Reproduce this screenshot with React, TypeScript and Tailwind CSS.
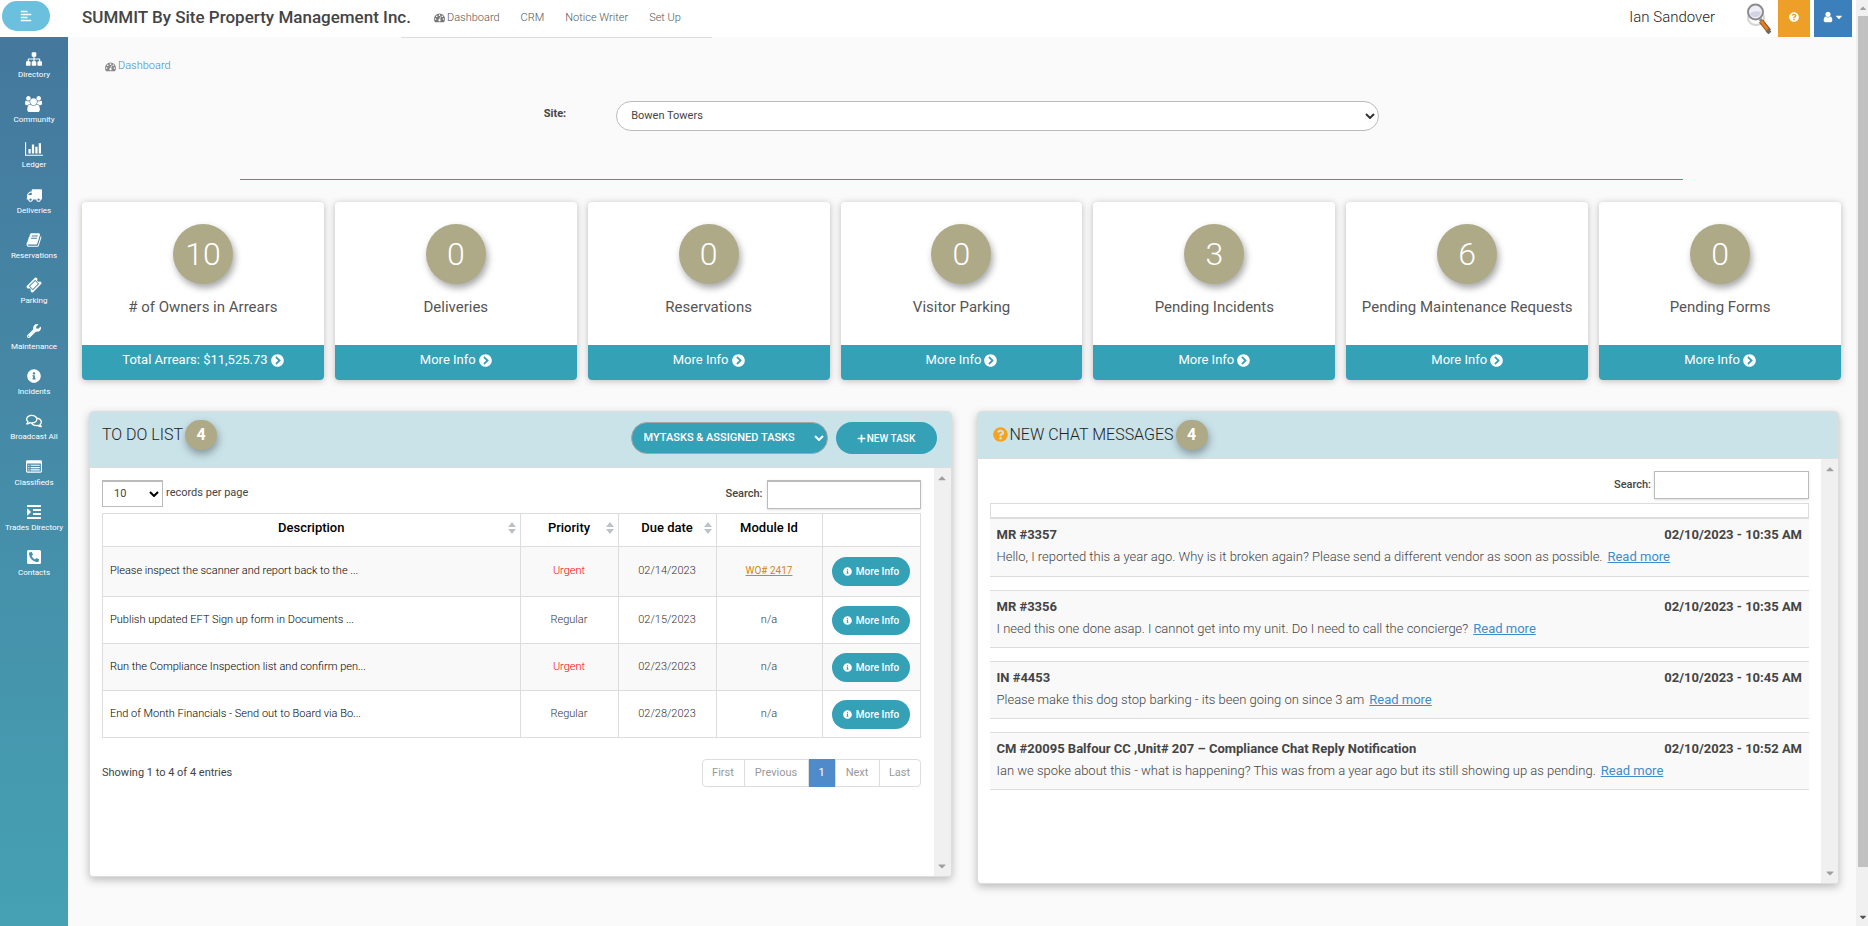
import type { ReactNode } from 'react';
import {
  FaAlignLeft,
  FaCaretDown,
  FaCaretUp,
  FaChevronCircleRight,
  FaIndent,
  FaInfoCircle,
  FaPhoneSquareAlt,
  FaPlus,
  FaQuestionCircle,
  FaRegComments,
  FaWrench,
} from 'react-icons/fa';

const PATHS = {
  sitemap:
    'M1792 1248v320q0 40-28 68t-68 28h-320q-40 0-68-28t-28-68v-320q0-40 28-68t68-28h96v-192h-512v192h96q40 0 68 28t28 68v320q0 40-28 68t-68 28h-320q-40 0-68-28t-28-68v-320q0-40 28-68t68-28h96v-192h-512v192h96q40 0 68 28t28 68v320q0 40-28 68t-68 28h-320q-40 0-68-28t-28-68v-320q0-40 28-68t68-28h96v-192q0-52 38-90t90-38h512v-192h-96q-40 0-68-28t-28-68v-320q0-40 28-68t68-28h320q40 0 68 28t28 68v320q0 40-28 68t-68 28h-96v192h512q52 0 90 38t38 90v192h96q40 0 68 28t28 68z',
  users:
    'M593 896q-162 5-265 128h-134q-82 0-138-40.5t-56-118.5q0-353 124-353 6 0 43.5 21t97.5 42.5 119 21.5q67 0 133-23-5 37-5 66 0 139 81 256zm1071 637q0 120-73 189.5t-194 69.5h-874q-121 0-194-69.5t-73-189.5q0-53 3.5-103.5t14-109 26.5-108.5 43-97.5 62-81 85.5-53.5 111.5-20q10 0 43 21.5t73 48 107 48 135 21.5 135-21.5 107-48 73-48 43-21.5q61 0 111.5 20t85.5 53.5 62 81 43 97.5 26.5 108.5 14 109 3.5 103.5zm-1024-1277q0 106-75 181t-181 75-181-75-75-181 75-181 181-75 181 75 75 181zm704 384q0 159-112.5 271.5t-271.5 112.5-271.5-112.5-112.5-271.5 112.5-271.5 271.5-112.5 271.5 112.5 112.5 271.5zm576 225q0 78-56 118.5t-138 40.5h-134q-103-123-265-128 81-117 81-256 0-29-5-66 66 23 133 23 59 0 119-21.5t97.5-42.5 43.5-21q124 0 124 353zm-128-609q0 106-75 181t-181 75-181-75-75-181 75-181 181-75 181 75 75 181z',
  chart:
    'M640 896v512h-256v-512h256zm384-512v1024h-256v-1024h256zm1024 1152v128h-2048v-1536h128v1408h1920zm-640-896v768h-256v-768h256zm384-384v1152h-256v-1152h256z',
  truck:
    'M640 1408q0-52-38-90t-90-38-90 38-38 90 38 90 90 38 90-38 38-90zm-384-512h384v-256h-158q-13 0-22 9l-195 195q-9 9-9 22v30zm1280 512q0-52-38-90t-90-38-90 38-38 90 38 90 90 38 90-38 38-90zm256-1088v1024q0 15-4 26.5t-13.5 18.5-16.5 11.5-23.5 6-22.5 2-25.5 0-22.5-.5q0 106-75 181t-181 75-181-75-75-181h-384q0 106-75 181t-181 75-181-75-75-181h-64q-3 0-22.5.5t-25.5 0-22.5-2-23.5-6-16.5-11.5-13.5-18.5-4-26.5q0-26 19-45t45-19v-320q0-8-.5-35t0-38 2.5-34.5 6.5-37 14-30.5 22.5-30l198-198q19-19 50.5-32t58.5-13h160v-192q0-26 19-45t45-19h1024q26 0 45 19t19 45z',
  book:
    'M1703 478q40 57 18 129l-275 906q-19 64-76.5 107.5t-122.5 43.5h-923q-77 0-148.5-53.5t-99.5-131.5q-24-67-2-127 0-4 3-27t4-37q1-8-3-21.5t-3-19.5q2-11 8-21t16.5-23.5 16.5-23.5q23-38 45-91.5t30-91.5q3-10 .5-30t-.5-28q3-11 17-28t17-23q21-36 42-92t25-90q1-9-2.5-32t.5-28q4-13 22-30.5t22-22.5q19-26 42.5-84.5t27.5-96.5q1-8-3-25.5t-2-26.5q2-8 9-18t18-23 17-21q8-12 16.5-30.5t15-35 16-36 19.5-32 26.5-23.5 36-11.5 47.5 5.5l-1 3q38-9 51-9h761q74 0 114 56t18 130l-274 906q-36 119-71.5 153.5t-128.5 34.5h-869q-27 0-38 15-11 16-1 43 24 70 144 70h923q29 0 56-15.5t35-41.5l300-987q7-22 5-57 38 15 59 43zm-1064 2q-4 13 2 22.5t20 9.5h608q13 0 25.5-9.5t16.5-22.5l21-64q4-13-2-22.5t-20-9.5h-608q-13 0-25.5 9.5t-16.5 22.5zm-83 256q-4 13 2 22.5t20 9.5h608q13 0 25.5-9.5t16.5-22.5l21-64q4-13-2-22.5t-20-9.5h-608q-13 0-25.5 9.5t-16.5 22.5z',
  ticket:
    'M1024 452l316 316-572 572-316-316zm-211 979l618-618q19-19 19-45t-19-45l-362-362q-18-18-45-18t-45 18l-618 618q-19 19-19 45t19 45l362 362q18 18 45 18t45-18zm889-637l-907 908q-37 37-90.5 37t-90.5-37l-126-126q56-56 56-136t-56-136-136-56-136 56l-125-126q-37-37-37-90.5t37-90.5l907-906q37-37 90.5-37t90.5 37l125 125q-56 56-56 136t56 136 136 56 136-56l126 125q37 37 37 90.5t-37 90.5z',
  gauge:
    'M384 1152q0-53-37.5-90.5t-90.5-37.5-90.5 37.5-37.5 90.5 37.5 90.5 90.5 37.5 90.5-37.5 37.5-90.5zm192-448q0-53-37.5-90.5t-90.5-37.5-90.5 37.5-37.5 90.5 37.5 90.5 90.5 37.5 90.5-37.5 37.5-90.5zm428 481l101-382q6-26-7.5-48.5t-38.5-29.5-48 6.5-30 39.5l-101 382q-60 5-107 43.5t-63 98.5q-20 77 20 146t117 89 146-20 89-117q16-60-6-117t-72-91zm660-33q0-53-37.5-90.5t-90.5-37.5-90.5 37.5-37.5 90.5 37.5 90.5 90.5 37.5 90.5-37.5 37.5-90.5zm-640-640q0-53-37.5-90.5t-90.5-37.5-90.5 37.5-37.5 90.5 37.5 90.5 90.5 37.5 90.5-37.5 37.5-90.5zm448 192q0-53-37.5-90.5t-90.5-37.5-90.5 37.5-37.5 90.5 37.5 90.5 90.5 37.5 90.5-37.5 37.5-90.5zm320 448q0 261-141 483-19 29-54 29h-1402q-35 0-54-29-141-221-141-483 0-182 71-348t191-286 286-191 348-71 348 71 286 191 191 286 71 348z',
  user:
    'M1536 1399q0 109-62.5 187t-150.5 78h-854q-88 0-150.5-78t-62.5-187q0-85 8.5-160.5t31.5-152 58.5-131 94-89 134.5-34.5q131 128 313 128t313-128q76 0 134.5 34.5t94 89 58.5 131 31.5 152 8.5 160.5zm-256-887q0 159-112.5 271.5t-271.5 112.5-271.5-112.5-112.5-271.5 112.5-271.5 271.5-112.5 271.5 112.5 112.5 271.5z',
  listAlt:
    'M256 1152h128v128h-128zM256 896h128v128h-128zM256 640h128v128h-128zM512 1152h1024v128h-1024zM512 896h1024v128h-1024zM512 640h1024v128h-1024zM1664 1376v-832q0-32-32-32h-1472q-32 0-32 32v832q0 32 32 32h1472q32 0 32-32zM1792 288v1088q0 66-47 113t-113 47h-1472q-66 0-113-47t-47-113v-1088q0-66 47-113t113-47h1472q66 0 113 47t47 113z',
};

function Glyph({ name, width = 1792, className }: { name: keyof typeof PATHS; width?: number; className: string }) {
  return (
    <svg viewBox={`0 0 ${width} 1792`} className={className} fill="currentColor" fillRule="evenodd" aria-hidden="true">
      <path d={PATHS[name]} />
    </svg>
  );
}

const sideItems: { label: string; icon: ReactNode }[] = [
  { label: 'Directory', icon: <Glyph name="sitemap" className="h-4" /> },
  { label: 'Community', icon: <Glyph name="users" width={1920} className="h-4" /> },
  { label: 'Ledger', icon: <Glyph name="chart" width={2048} className="h-4" /> },
  { label: 'Deliveries', icon: <Glyph name="truck" className="h-4" /> },
  { label: 'Reservations', icon: <Glyph name="book" className="h-4" /> },
  { label: 'Parking', icon: <Glyph name="ticket" className="h-4" /> },
  { label: 'Maintenance', icon: <FaWrench className="size-[14px]" /> },
  { label: 'Incidents', icon: <FaInfoCircle className="size-[14px]" /> },
  { label: 'Broadcast All', icon: <FaRegComments className="size-4" /> },
  { label: 'Classifieds', icon: <Glyph name="listAlt" className="h-4" /> },
  { label: 'Trades Directory', icon: <FaIndent className="size-4" /> },
  { label: 'Contacts', icon: <FaPhoneSquareAlt className="size-4" /> },
];

const stats = [
  { count: 10, label: '# of Owners in Arrears', link: 'Total Arrears: $11,525.73' },
  { count: 0, label: 'Deliveries', link: 'More Info' },
  { count: 0, label: 'Reservations', link: 'More Info' },
  { count: 0, label: 'Visitor Parking', link: 'More Info' },
  { count: 3, label: 'Pending Incidents', link: 'More Info' },
  { count: 6, label: 'Pending Maintenance Requests', link: 'More Info' },
  { count: 0, label: 'Pending Forms', link: 'More Info' },
];

const tasks = [
  { text: 'Please inspect the scanner and report back to the ...', urgent: true, due: '02/14/2023', module: 'WO# 2417' },
  { text: 'Publish updated EFT Sign up form in Documents ...', urgent: false, due: '02/15/2023', module: null },
  { text: 'Run the Compliance Inspection list and confirm pen...', urgent: true, due: '02/23/2023', module: null },
  { text: 'End of Month Financials - Send out to Board via Bo...', urgent: false, due: '02/28/2023', module: null },
];

const messages = [
  {
    title: 'MR #3357',
    date: '02/10/2023 - 10:35 AM',
    text: 'Hello, I reported this a year ago. Why is it broken again? Please send a different vendor as soon as possible.',
  },
  {
    title: 'MR #3356',
    date: '02/10/2023 - 10:35 AM',
    text: 'I need this one done asap. I cannot get into my unit. Do I need to call the concierge?',
  },
  {
    title: 'IN #4453',
    date: '02/10/2023 - 10:45 AM',
    text: 'Please make this dog stop barking - its been going on since 3 am',
  },
  {
    title: 'CM #20095 Balfour CC ,Unit# 207 – Compliance Chat Reply Notification',
    date: '02/10/2023 - 10:52 AM',
    text: 'Ian we spoke about this - what is happening? This was from a year ago but its still showing up as pending.',
  },
];

function Chevron({ className }: { className: string }) {
  return (
    <svg viewBox="0 0 10 6" className={className} fill="none" stroke="currentColor" strokeWidth="2" aria-hidden="true">
      <path d="M1 1l4 4 4-4" />
    </svg>
  );
}

function Magnifier() {
  return (
    <svg viewBox="0 0 26 31" className="h-[31px] w-[26px]" aria-hidden="true">
      <ellipse cx="10" cy="15" rx="8" ry="7" fill="none" stroke="#d4d4d4" strokeWidth="2" />
      <path d="M14 16l3 4" stroke="#8a8a8a" strokeWidth="3" />
      <path d="M15 18l8 10" stroke="#8f4b12" strokeWidth="5" />
      <path d="M15 18l7 9" stroke="#df7f27" strokeWidth="3" />
      <path d="M21 27l3 3" stroke="#6b6b6b" strokeWidth="4" />
      <circle cx="9.500" cy="9" r="7.500" fill="#eeeef8" stroke="#8c8c8c" strokeWidth="2" />
      <path d="M4 10q5-3 11-1-1 5-5.500 5T4 10z" fill="#d3d3e8" />
    </svg>
  );
}

function ScrollTrack() {
  return (
    <div className="flex w-[17px] shrink-0 flex-col items-center justify-between bg-[#f0f0f0] py-1 text-[#a0a0a0]">
      <FaCaretUp className="size-3" />
      <FaCaretDown className="size-3" />
    </div>
  );
}

function SortArrows() {
  return (
    <svg viewBox="0 0 8 12" className="h-3 w-2 shrink-0" fill="#bcc2c8" aria-hidden="true">
      <path d="M0 5l4-5 4 5zM0 7h8l-4 5z" />
    </svg>
  );
}

function CountBadge({ count }: { count: number }) {
  return (
    <span className="ml-[2px] flex h-[30px] w-8 items-center justify-center rounded-full bg-[#aeaa88] text-base font-bold text-white shadow-[1px_4px_8px_rgba(0,0,0,0.35)]">
      {count}
    </span>
  );
}

function Sidebar() {
  return (
    <nav className="w-[68px] shrink-0 bg-linear-to-b from-[#44789d] to-[#45a1b3] pt-[13px]">
      <ul>
        {sideItems.map((item) => (
          <li key={item.label} className="h-[45px] nth-[3n]:h-[46px]">
            <a href="#" className="flex flex-col items-center text-[8px] leading-4 whitespace-nowrap text-white">
              <span className="flex h-[17px] items-center">{item.icon}</span>
              {item.label}
            </a>
          </li>
        ))}
      </ul>
    </nav>
  );
}

function Header() {
  return (
    <header className="flex h-[37px] bg-white pr-1">
      <div className="w-[68px] shrink-0 px-[2px] py-[1px]">
        <button aria-label="Toggle menu" className="flex h-[30px] w-12 items-center justify-center rounded-full bg-[#6bc0de] text-white">
          <FaAlignLeft className="size-3" />
        </button>
      </div>
      <h1 className="w-[333px] shrink-0 pl-[14px] text-[17px] leading-[35px] font-medium whitespace-nowrap text-[#444]">
        SUMMIT By Site Property Management Inc.
      </h1>
      <nav className="flex h-[38px] w-[311px] shrink-0 gap-[21px] border-b border-[#ddd] pl-[33px] text-[11px] leading-[35px] font-light whitespace-nowrap text-[#555]">
        <a href="#" className="flex h-[35px] items-center gap-[2px]">
          <Glyph name="gauge" className="h-[11px] text-[#777]" />
          Dashboard
        </a>
        <a href="#">CRM</a>
        <a href="#">Notice Writer</a>
        <a href="#">Set Up</a>
      </nav>
      <div className="ml-auto flex">
        <span className="pr-[31px] text-[15px] leading-[35px] font-light text-[#222]">Ian Sandover</span>
        <button aria-label="Search" className="flex w-8 items-center">
          <Magnifier />
        </button>
        <button aria-label="Help" className="mr-1 flex w-8 items-center justify-center bg-[#ee9f28] pb-1 text-white">
          <FaQuestionCircle className="size-[10px]" />
        </button>
        <button aria-label="Account" className="flex w-[38px] items-center justify-center bg-[#3b80bb] pb-1 text-white">
          <Glyph name="user" className="h-3" />
          <FaCaretDown className="size-[10px]" />
        </button>
      </div>
    </header>
  );
}

function StatCard({ count, label, link }: (typeof stats)[number]) {
  return (
    <section className="flex flex-col overflow-hidden rounded bg-white text-center shadow-[0_1px_7px_rgba(0,0,0,0.25)]">
      <div className="flex h-[143px] flex-col items-center pt-[22px]">
        <span className="flex size-[60px] items-center justify-center rounded-full bg-[#aeaa88] text-[32px] font-light text-white shadow-[2px_4px_7px_rgba(0,0,0,0.35)]">
          {count}
        </span>
        <h2 className="pt-3 text-[15px] leading-[22px] whitespace-nowrap text-[#555]">{label}</h2>
      </div>
      <a href="#" className="flex h-[35px] items-center justify-center gap-[3px] bg-[#35a1b7] pb-[5px] text-[13px] text-white">
        {link}
        <FaChevronCircleRight className="size-[13px]" />
      </a>
    </section>
  );
}

function TodoPanel() {
  const headCell = 'border border-[#ddd] text-[13px] font-medium';
  const cell = 'border border-[#ddd] text-center';
  return (
    <section className="flex-1 overflow-hidden rounded border border-[#ddd] bg-white shadow-[0_3px_9px_rgba(0,0,0,0.25)]">
      <div className="flex h-14 items-start border-b border-[#ddd] bg-[#cae3e9] pt-2 pr-[14px] pl-[12px]">
        <h2 className="text-base leading-[30px] font-light text-[#222]">TO DO LIST</h2>
        <CountBadge count={4} />
        <div className="relative mt-[2px] ml-auto text-white">
          <select
            aria-label="Task filter"
            className="h-8 w-[197px] appearance-none rounded-full border border-[#a5a5a5] bg-[#35a1b7] pl-3 text-[11px] font-medium"
          >
            <option>MYTASKS &amp; ASSIGNED TASKS</option>
          </select>
          <Chevron className="pointer-events-none absolute top-[13px] right-1 h-[6px] w-[10px]" />
        </div>
        <button className="mt-[2px] ml-2 flex h-8 w-[101px] items-center justify-center gap-[1px] rounded-full bg-[#35a1b7] text-[10px] font-medium text-white">
          <FaPlus className="size-[9px]" />
          NEW TASK
        </button>
      </div>
      <div className="flex h-[408px]">
        <div className="flex-1 px-[12px] pt-3 pr-[13px] text-[11px]">
          <div className="flex h-[33px] items-start justify-between text-[#444]">
            <label className="flex items-center gap-[3px]">
              <span className="relative">
                <select className="h-[27px] w-[61px] appearance-none border border-t-2 border-[#bbb] bg-white pl-[11px] text-[11px]">
                  <option>10</option>
                </select>
                <Chevron className="pointer-events-none absolute top-[11px] right-1 h-[6px] w-[10px] text-black" />
              </span>
              records per page
            </label>
            <label className="flex items-center gap-1 font-medium">
              Search:
              <input type="search" className="h-[29px] w-[154px] border border-t-2 border-[#bbb] bg-white px-2 shadow-sm" />
            </label>
          </div>
          <table className="w-full table-fixed border-collapse">
            <colgroup>
              <col />
              <col className="w-[98px]" />
              <col className="w-[98px]" />
              <col className="w-[106px]" />
              <col className="w-[98px]" />
            </colgroup>
            <thead>
              <tr className="h-[33px] text-black">
                {['Description', 'Priority', 'Due date'].map((name) => (
                  <th key={name} className="border border-[#ddd] pr-1 pb-1 pl-3 text-[13px] font-medium">
                    <span className="flex items-center">
                      <span className="flex-1">{name}</span>
                      <SortArrows />
                    </span>
                  </th>
                ))}
                <th className="border border-[#ddd] pb-1 text-[13px] font-medium">Module Id</th>
                <th aria-label="Actions" className={headCell} />
              </tr>
            </thead>
            <tbody className="font-light text-[#333]">
              {tasks.map((task) => (
                <tr key={task.text} className="h-[47px] odd:bg-[#f9f9f9] first:h-[50px]">
                  <td className="border border-[#ddd] pl-[7px] text-black">{task.text}</td>
                  <td className={cell}>
                    {task.urgent ? <span className="text-[#f00]">Urgent</span> : 'Regular'}
                  </td>
                  <td className={cell}>{task.due}</td>
                  <td className={cell}>
                    {task.module ? (
                      <a href="#" className="text-[10px] font-normal text-[#d58512] underline">
                        {task.module}
                      </a>
                    ) : (
                      'n/a'
                    )}
                  </td>
                  <td className={cell}>
                    <button className="mx-auto flex h-[29px] w-[78px] items-center justify-center gap-1 rounded-full bg-[#35a1b7] text-[10px] font-medium text-white">
                      <FaInfoCircle className="size-[9px]" />
                      More Info
                    </button>
                  </td>
                </tr>
              ))}
            </tbody>
          </table>
          <div className="flex items-start justify-between pt-[21px]">
            <p className="leading-7 text-[#444]">Showing 1 to 4 of 4 entries</p>
            <div className="flex h-7 divide-x divide-[#ddd] rounded border border-[#ddd] text-[#999]">
              <button className="w-[42px]">First</button>
              <button className="w-16">Previous</button>
              <button className="-my-px w-[27px] bg-[#4f8bca] text-white">1</button>
              <button className="w-11">Next</button>
              <button className="w-10">Last</button>
            </div>
          </div>
        </div>
        <ScrollTrack />
      </div>
    </section>
  );
}

function ChatPanel() {
  return (
    <section className="flex-1 overflow-hidden rounded border border-[#ddd] bg-white shadow-[0_3px_9px_rgba(0,0,0,0.25)]">
      <div className="flex h-[47px] items-start border-b border-[#ddd] bg-[#cae3e9] pt-2 pl-[15px]">
        <FaQuestionCircle className="mt-[7px] mr-[2px] size-[15px] text-[#f9a21d]" />
        <h2 className="text-base leading-[30px] font-light text-[#222]">NEW CHAT MESSAGES</h2>
        <CountBadge count={4} />
      </div>
      <div className="flex h-[424px]">
        <div className="flex-1 px-3 pt-3 text-[#444]">
          <label className="flex items-center justify-end gap-[3px] text-[11px] font-medium">
            Search:
            <input type="search" className="h-7 w-[155px] border border-[#bbb] bg-white px-2 shadow-sm" />
          </label>
          <div className="mt-1 h-4 border border-b-2 border-[#ddd]" />
          <ul className="flex flex-col gap-[13px]">
            {messages.map((message) => (
              <li key={message.title} className="h-[58px] border-y border-[#ddd] bg-[#f9f9f9] px-[7px] pt-[5px] first:border-t-0">
                <div className="flex justify-between text-[13px] leading-[22px] font-bold">
                  <h3>{message.title}</h3>
                  <time>{message.date}</time>
                </div>
                <p className="text-[13px] leading-[22px] font-light">
                  {message.text}
                  <a href="#" className="ml-[5px] font-normal text-[#428bca] underline">
                    Read more
                  </a>
                </p>
              </li>
            ))}
          </ul>
        </div>
        <ScrollTrack />
      </div>
    </section>
  );
}

export default function App() {
  return (
    <div className="flex min-h-screen bg-[#fafafa] font-['Roboto',sans-serif]">
      <div className="flex min-w-0 flex-1 flex-col">
        <Header />
        <div className="flex flex-1">
          <Sidebar />
          <main className="min-w-0 flex-1 pr-[15px] pl-[14px]">
            <a href="#" className="flex items-center gap-[2px] pt-[21px] pl-[23px] text-[11px] leading-4 font-light text-[#428bca]">
              <Glyph name="gauge" className="h-[11px] text-[#888]" />
              Dashboard
            </a>
            <div className="flex justify-center gap-[50px] pt-[27px]">
              <label htmlFor="site" className="text-[11px] leading-[26px] font-bold text-[#444]">
                Site:
              </label>
              <div className="relative w-[763px]">
                <select
                  id="site"
                  className="h-[30px] w-full appearance-none rounded-full border border-[#bbb] bg-white pl-[14px] text-[11px] text-[#444]"
                >
                  <option>Bowen Towers</option>
                </select>
                <Chevron className="pointer-events-none absolute top-3 right-1 h-[6px] w-[10px] text-[#333]" />
              </div>
            </div>
            <hr className="mx-[158px] mt-12 border-[#3ba283]" />
            <div className="grid grid-cols-7 gap-[11px] pt-[22px]">
              {stats.map((stat) => (
                <StatCard key={stat.label} {...stat} />
              ))}
            </div>
            <div className="flex items-start gap-[25px] pt-[31px] pr-[2px] pl-[7px]">
              <TodoPanel />
              <ChatPanel />
            </div>
          </main>
        </div>
      </div>
      {/* page scroll bar */}
      <div className="flex w-3 shrink-0 flex-col items-center bg-[#f0f0f0] pl-[2px]">
        <div className="flex h-4 items-center text-[#a0a0a0]">
          <FaCaretUp className="size-[10px]" />
        </div>
        <div className="w-full flex-1 bg-[#c1c1c1]" />
        <div className="flex h-[59px] items-end pb-1 text-[#505050]">
          <FaCaretDown className="size-[10px]" />
        </div>
      </div>
    </div>
  );
}
